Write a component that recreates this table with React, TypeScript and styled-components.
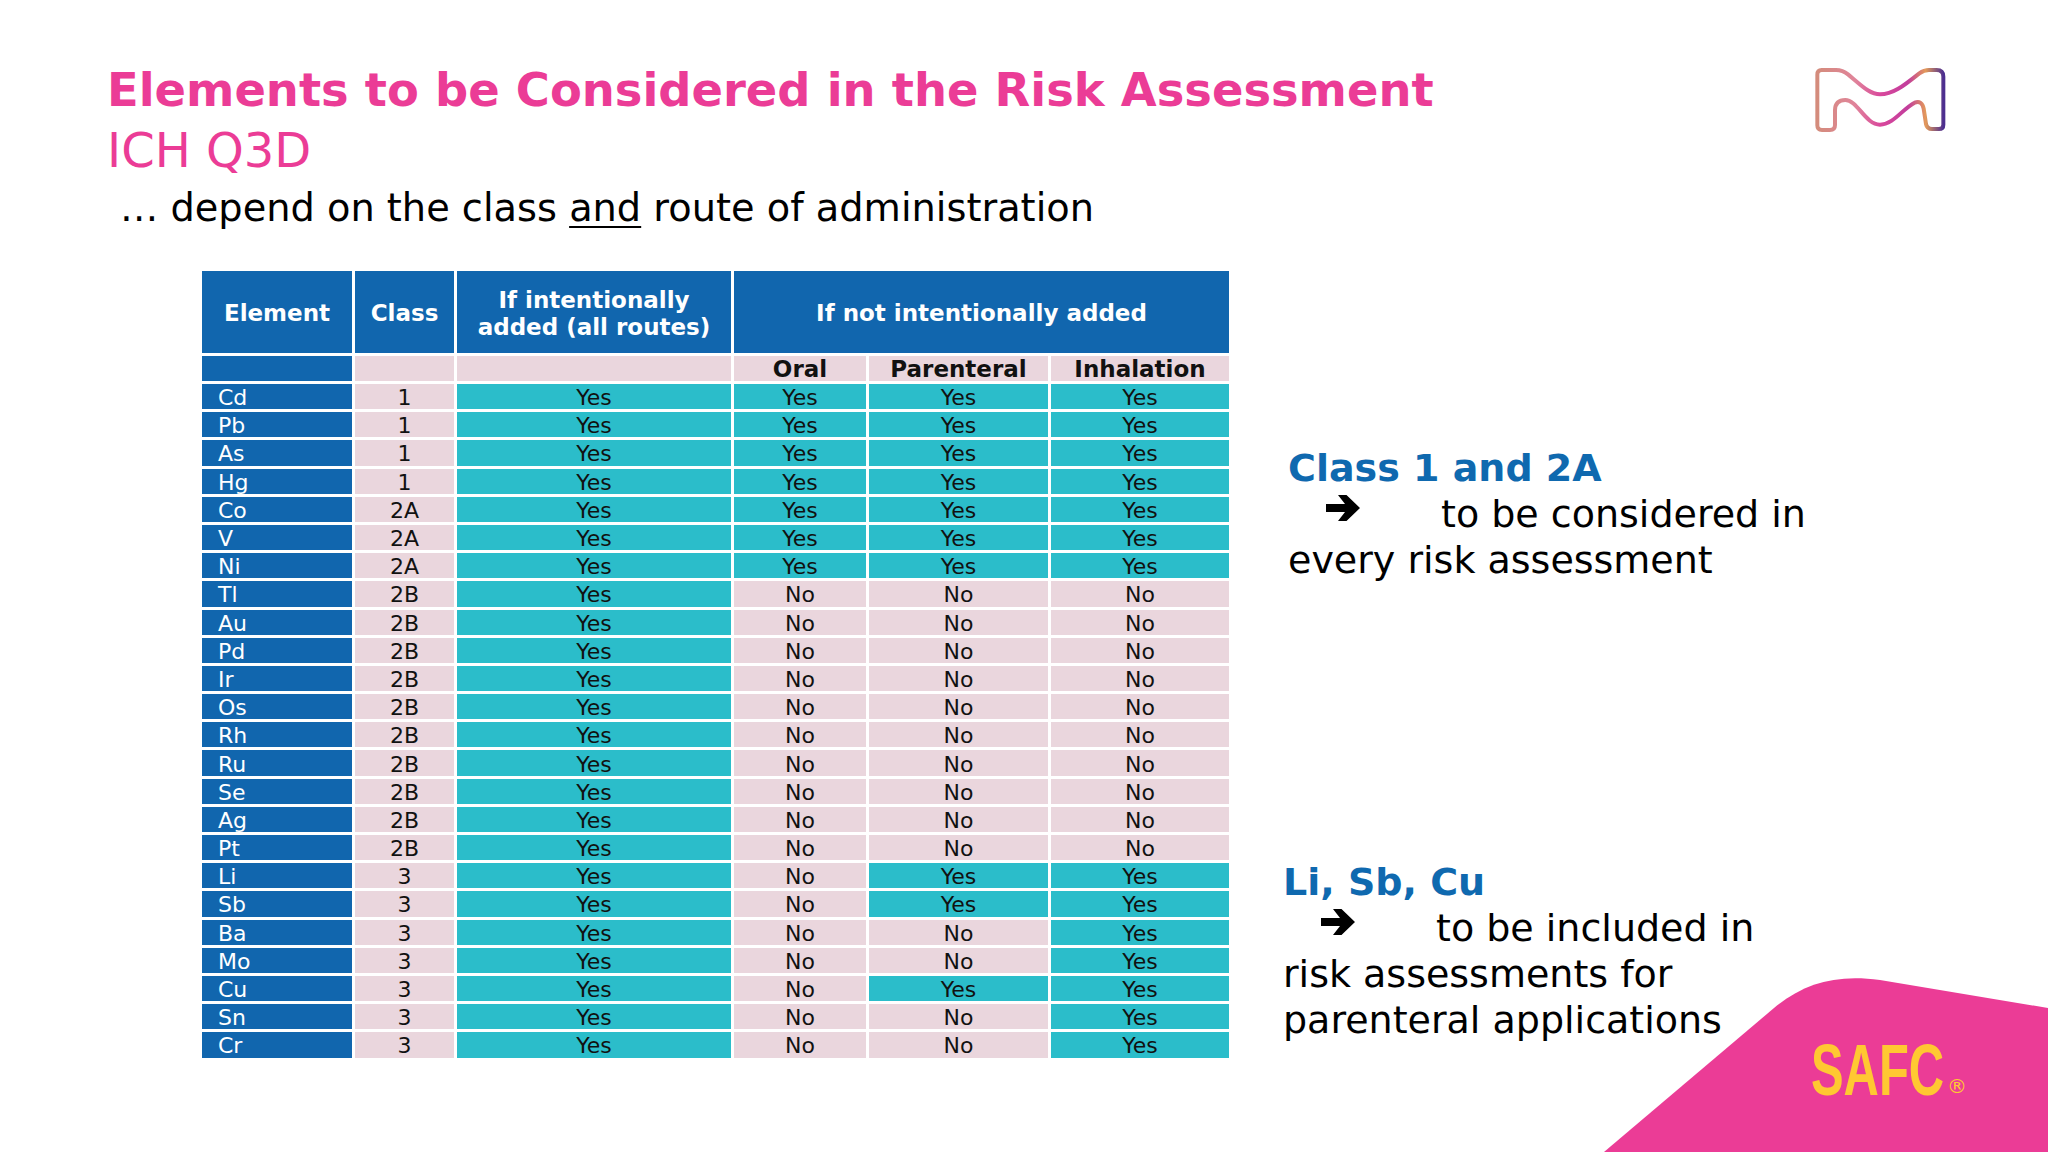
import React from "react";
import styled, { createGlobalStyle } from "styled-components";

const PINK = "#eb3c96";
const BLUE = "#1166ae";
const RICH_BLUE = "#0f69af";
const TEAL = "#2bbdca";
const BLUSH = "#ead6dd";

const GlobalStyle = createGlobalStyle`
  html, body {
    margin: 0;
    padding: 0;
    background: #fff;
  }
  body {
    font-family: "DejaVu Sans", Verdana, sans-serif;
    color: #111;
  }
`;

const Slide = styled.main`
  position: relative;
  width: 2048px;
  height: 1152px;
  overflow: hidden;
  background: #fff;
`;

const Header = styled.header`
  display: flex;
  justify-content: space-between;
  align-items: flex-start;
  padding: 50px 68px 0 107px;
`;

const TitleBlock = styled.div`
  display: flex;
  flex-direction: column;
  padding-top: 13px;
`;

const Title = styled.h1`
  margin: 0;
  font-size: 46.4px;
  line-height: 55px;
  font-weight: 700;
  color: ${PINK};
`;

const Subtitle = styled.h2`
  margin: 3px 0 0;
  font-size: 48px;
  line-height: 58px;
  font-weight: 400;
  color: ${PINK};
`;

const Lead = styled.p`
  margin: 6px 0 0 13px;
  font-size: 38.3px;
  line-height: 46px;
  color: #000;

  u {
    text-decoration-thickness: 2px;
    text-underline-offset: 5px;
  }
`;

const Body = styled.section`
  display: flex;
  align-items: flex-start;
  gap: 54px;
  padding: 40px 0 0 202px;
`;

const Grid = styled.div`
  display: grid;
  grid-template-columns: 150px 99px 274px 132px 179px 178px;
  grid-template-rows: 82px 25px;
  grid-auto-rows: 25.2px;
  gap: 3px;
`;

type Tone = "blue" | "teal" | "pink";
const toneBg: Record<Tone, string> = { blue: BLUE, teal: TEAL, pink: BLUSH };

const HeadCell = styled.div<{ $span?: number }>`
  grid-column: span ${(p) => p.$span ?? 1};
  display: flex;
  align-items: center;
  justify-content: center;
  text-align: center;
  padding-top: 3px;
  background: ${BLUE};
  color: #fff;
  font-size: 23px;
  font-weight: 700;
  line-height: 27px;
`;

const Cell = styled.div<{ $tone: Tone; $left?: boolean; $bold?: boolean }>`
  display: flex;
  align-items: center;
  justify-content: ${(p) => (p.$left ? "flex-start" : "center")};
  padding-left: ${(p) => (p.$left ? "16px" : "0")};
  padding-top: 2px;
  background: ${(p) => toneBg[p.$tone]};
  color: ${(p) => (p.$tone === "blue" ? "#fff" : "#111")};
  font-size: ${(p) => (p.$bold ? "23px" : "22px")};
  font-weight: ${(p) => (p.$bold ? 700 : 400)};
  line-height: 25px;
  white-space: nowrap;
`;

const Side = styled.aside`
  display: flex;
  flex-direction: column;
  padding-top: 174px;
`;

const Note = styled.div<{ $shift?: number }>`
  margin-left: ${(p) => p.$shift ?? 0}px;
  font-size: 38px;
  line-height: 46px;
  color: #000;

  & + & {
    margin-top: 276px;
  }
`;

const NoteHead = styled.div`
  font-weight: 700;
  color: ${RICH_BLUE};
`;

const ArrowLine = styled.div`
  display: flex;
  align-items: baseline;
`;

const ArrowMark = styled.svg`
  flex: none;
  width: 34px;
  height: 28px;
  margin: 0 81px 0 38px;
  align-self: center;
  position: relative;
  top: -6px;
`;

const Corner = styled.div`
  position: absolute;
  right: 0;
  bottom: 0;
  width: 444px;
  height: 175px;

  svg {
    display: block;
  }
`;

const Brand = styled.div`
  position: absolute;
  left: 207px;
  top: 56px;
  display: flex;
  align-items: flex-end;
  color: #ffc832;
`;

const BrandWord = styled.span`
  display: inline-block;
  font-family: "Liberation Sans", Arial, sans-serif;
  font-weight: 700;
  font-size: 73px;
  line-height: 73px;
  width: 134px;
  transform: scaleX(0.67);
  transform-origin: left center;
`;

const BrandMark = styled.span`
  font-family: "DejaVu Sans", sans-serif;
  font-size: 20px;
  line-height: 20px;
  margin: 0 0 10px 2px;
`;

type Row = { el: string; cls: string; oral: boolean; par: boolean; inh: boolean };

const rows: Row[] = [
  { el: "Cd", cls: "1", oral: true, par: true, inh: true },
  { el: "Pb", cls: "1", oral: true, par: true, inh: true },
  { el: "As", cls: "1", oral: true, par: true, inh: true },
  { el: "Hg", cls: "1", oral: true, par: true, inh: true },
  { el: "Co", cls: "2A", oral: true, par: true, inh: true },
  { el: "V", cls: "2A", oral: true, par: true, inh: true },
  { el: "Ni", cls: "2A", oral: true, par: true, inh: true },
  { el: "Tl", cls: "2B", oral: false, par: false, inh: false },
  { el: "Au", cls: "2B", oral: false, par: false, inh: false },
  { el: "Pd", cls: "2B", oral: false, par: false, inh: false },
  { el: "Ir", cls: "2B", oral: false, par: false, inh: false },
  { el: "Os", cls: "2B", oral: false, par: false, inh: false },
  { el: "Rh", cls: "2B", oral: false, par: false, inh: false },
  { el: "Ru", cls: "2B", oral: false, par: false, inh: false },
  { el: "Se", cls: "2B", oral: false, par: false, inh: false },
  { el: "Ag", cls: "2B", oral: false, par: false, inh: false },
  { el: "Pt", cls: "2B", oral: false, par: false, inh: false },
  { el: "Li", cls: "3", oral: false, par: true, inh: true },
  { el: "Sb", cls: "3", oral: false, par: true, inh: true },
  { el: "Ba", cls: "3", oral: false, par: false, inh: true },
  { el: "Mo", cls: "3", oral: false, par: false, inh: true },
  { el: "Cu", cls: "3", oral: false, par: true, inh: true },
  { el: "Sn", cls: "3", oral: false, par: false, inh: true },
  { el: "Cr", cls: "3", oral: false, par: false, inh: true },
];

function YesNo({ on }: { on: boolean }) {
  return <Cell $tone={on ? "teal" : "pink"}>{on ? "Yes" : "No"}</Cell>;
}

function Arrow() {
  return (
    <ArrowMark viewBox="0 0 34 28">
      <path d="M0 10 H19 L12 1 H20.5 L34 14 L20.5 27 H12 L19 18 H0 Z" fill="#000" />
    </ArrowMark>
  );
}

function Logo() {
  return (
    <svg width="200" height="100" viewBox="0 0 600 300">
      <defs>
        <linearGradient id="mgrad" x1="0" y1="0" x2="1" y2="0">
          <stop offset="0" stopColor="#d48c7c" />
          <stop offset="0.3" stopColor="#e0849a" />
          <stop offset="0.5" stopColor="#d9489c" />
          <stop offset="0.72" stopColor="#c23d9c" />
          <stop offset="0.86" stopColor="#e39a5a" />
          <stop offset="1" stopColor="#4d2f90" />
        </linearGradient>
      </defs>
      <path
        d="M125 60 L168 60 Q188 60 204 73 C248 110 270 133 300 133 C338 133 368 110 418 70 Q432 60 447 60 L470 60 Q490 60 490 80 L490 224 Q490 237 477 237 L456 237 Q441 237 438 222 L431 176 Q426 150 404 158 C368 176 340 224 300 224 C256 224 232 150 196 150 Q166 150 165 180 L165 225 Q165 240 150 240 L126 240 Q112 240 112 226 L112 74 Q112 60 125 60 Z"
        fill="none"
        stroke="url(#mgrad)"
        strokeWidth="12"
        strokeLinejoin="round"
      />
    </svg>
  );
}

export default function App() {
  return (
    <>
      <GlobalStyle />
      <Slide>
        <Header>
          <TitleBlock>
            <Title>Elements to be Considered in the Risk Assessment</Title>
            <Subtitle>ICH Q3D</Subtitle>
            <Lead>
              … depend on the class <u>and</u> route of administration
            </Lead>
          </TitleBlock>
          <Logo />
        </Header>

        <Body>
          <Grid>
            <HeadCell>Element</HeadCell>
            <HeadCell>Class</HeadCell>
            <HeadCell>
              If intentionally
              <br />
              added (all routes)
            </HeadCell>
            <HeadCell $span={3}>If not intentionally added</HeadCell>

            <Cell $tone="blue" />
            <Cell $tone="pink" />
            <Cell $tone="pink" />
            <Cell $tone="pink" $bold>Oral</Cell>
            <Cell $tone="pink" $bold>Parenteral</Cell>
            <Cell $tone="pink" $bold>Inhalation</Cell>

            {rows.map((r) => (
              <React.Fragment key={r.el}>
                <Cell $tone="blue" $left>{r.el}</Cell>
                <Cell $tone="pink">{r.cls}</Cell>
                <Cell $tone="teal">Yes</Cell>
                <YesNo on={r.oral} />
                <YesNo on={r.par} />
                <YesNo on={r.inh} />
              </React.Fragment>
            ))}
          </Grid>

          <Side>
            <Note $shift={5}>
              <NoteHead>Class 1 and 2A</NoteHead>
              <ArrowLine>
                <Arrow />
                <span>to be considered in</span>
              </ArrowLine>
              <div>every risk assessment</div>
            </Note>
            <Note>
              <NoteHead>Li, Sb, Cu</NoteHead>
              <ArrowLine>
                <Arrow />
                <span>to be included in</span>
              </ArrowLine>
              <div>risk assessments for</div>
              <div>parenteral applications</div>
            </Note>
          </Side>
        </Body>

        <Corner>
          <svg width="444" height="175" viewBox="0 0 444 175">
            <path d="M0 175 L170 31 C200 6 232 -3 276 3 L444 31 L444 175 Z" fill={PINK} />
          </svg>
          <Brand>
            <BrandWord>SAFC</BrandWord>
            <BrandMark>®</BrandMark>
          </Brand>
        </Corner>
      </Slide>
    </>
  );
}
